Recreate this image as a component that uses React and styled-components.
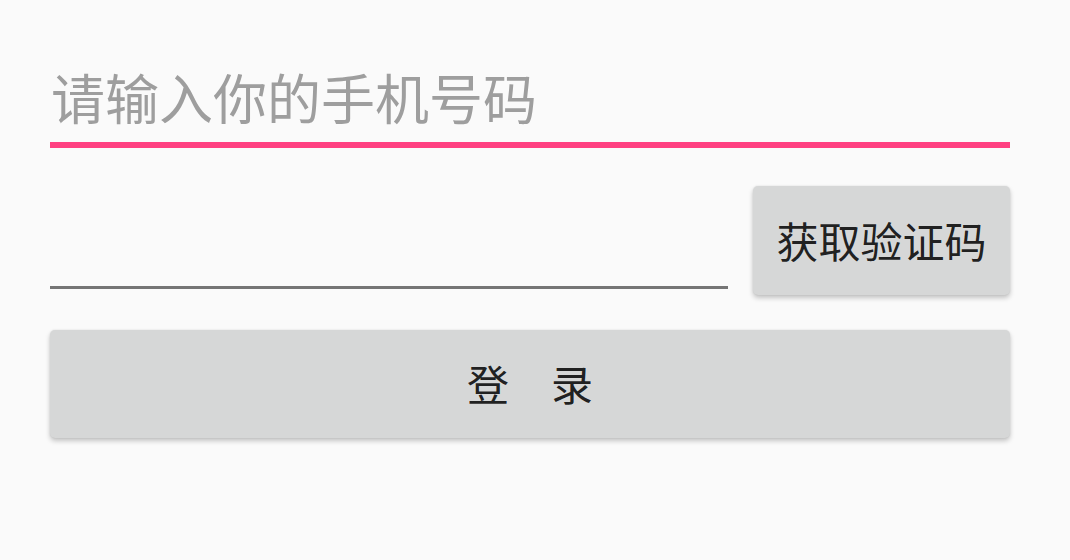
import React from "react";
import styled, { createGlobalStyle } from "styled-components";

const GlobalStyle = createGlobalStyle`
  html, body {
    margin: 0;
    padding: 0;
    background: #fafafa;
  }
  body {
    font-family: "Noto Sans CJK SC", "Noto Sans", sans-serif;
  }
`;

const Page = styled.div`
  padding: 58px 60px 40px 50px;
`;

const Field = styled.div`
  flex: 1;
  height: ${props => props.height}px;
  border-bottom: ${props => (props.active ? "6px solid #ff4081" : "3px solid #757575")};
  box-sizing: content-box;
  display: flex;
  align-items: flex-start;
`;

const Input = styled.input`
  width: 100%;
  border: none;
  outline: none;
  background: transparent;
  padding: 0 0 0 1px;
  margin: 0;
  font-family: inherit;
  font-size: ${props => props.size}px;
  line-height: 1.448;
  height: ${props => Math.round(props.size * 1.448)}px;
  color: rgba(0, 0, 0, 0.87);

  &::placeholder {
    color: #9e9e9e;
  }
`;

const Row = styled.div`
  display: flex;
  gap: 25px;
  margin-top: 38px;
`;

const Button = styled.button`
  flex: none;
  border: none;
  border-radius: 5px;
  background: #d6d7d7;
  color: rgba(0, 0, 0, 0.87);
  font-family: inherit;
  font-size: 42px;
  height: ${props => props.height}px;
  width: ${props => props.width || "100%"};
  padding: 0 0 3px;
  margin: ${props => (props.gapTop ? `${props.gapTop}px 0 0` : "0")};
  box-shadow: 0 3px 5px rgba(0, 0, 0, 0.22), 0 0 2px rgba(0, 0, 0, 0.1);
  display: flex;
  align-items: center;
  justify-content: center;
  cursor: pointer;
`;

export default function App() {
  return (
    <>
      <GlobalStyle />
      <Page>
        <Field active height={84}>
          <Input size={54} placeholder="请输入你的手机号码" />
        </Field>
        <Row>
          <Field height={100}>
            <Input size={42} />
          </Field>
          <Button width="257px" height={109}>获取验证码</Button>
        </Row>
        <Button gapTop={35} height={108}>登　录</Button>
      </Page>
    </>
  );
}
